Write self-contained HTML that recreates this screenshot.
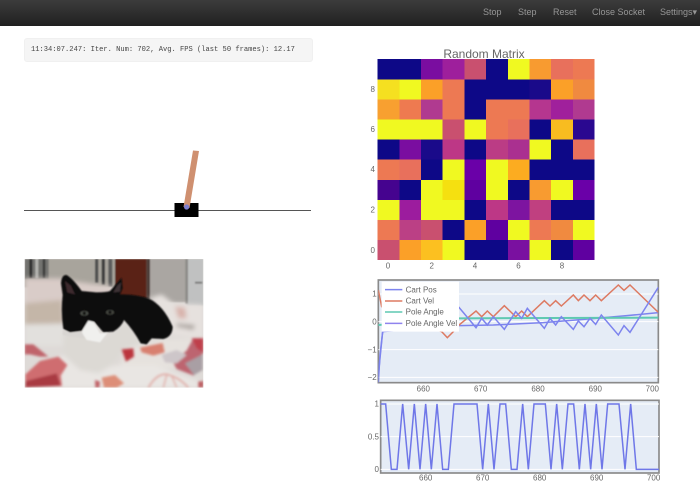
<!DOCTYPE html>
<html><head><meta charset="utf-8"><style>
html,body{margin:0;padding:0;background:#fff;width:700px;height:497px;overflow:hidden;font-family:"Liberation Sans",sans-serif}
.nav{position:absolute;left:0;top:0;width:700px;height:26px;background:linear-gradient(#3c3c3c,#202020)}
.nav span{position:absolute;top:7px;font-size:9px;line-height:11px;color:#969696;white-space:nowrap;filter:blur(.3px)}
.pre{position:absolute;left:24px;top:38px;width:289px;height:24px;box-sizing:border-box;background:#f5f5f5;border:1px solid #f0f0f0;border-radius:3px;font-family:"Liberation Mono",monospace;font-size:7.1px;line-height:22px;padding-left:6px;color:#444;white-space:nowrap;filter:blur(.25px)}
svg{position:absolute;left:0;top:0;filter:blur(.28px)}
svg text{font-family:"Liberation Sans",sans-serif}
</style></head><body>
<div class="nav"><span style="left:483px">Stop</span><span style="left:518px">Step</span><span style="left:553px">Reset</span><span style="left:592px">Close Socket</span><span style="left:660px">Settings▾</span></div>
<div class="pre">11:34:07.247: Iter. Num: 702, Avg. FPS (last 50 frames): 12.17</div>
<svg width="700" height="497" viewBox="0 0 700 497">
<defs>
<filter id="b1" x="-10%" y="-10%" width="120%" height="120%"><feGaussianBlur stdDeviation="2"/></filter>
<filter id="b3" x="-10%" y="-10%" width="120%" height="120%"><feGaussianBlur stdDeviation="4"/></filter>
<filter id="b2" x="-10%" y="-10%" width="120%" height="120%"><feGaussianBlur stdDeviation="7"/></filter>
<clipPath id="cc"><rect x="14" y="12" width="536" height="386"/></clipPath>
<clipPath id="c1"><rect x="55" y="15" width="840" height="308"/></clipPath>
</defs>

<!-- cartpole -->
<line x1="24" y1="210.5" x2="311" y2="210.5" stroke="#555" stroke-width="1"/>
<rect x="174.5" y="203" width="24" height="14" fill="#000"/>
<polygon points="193,150.5 199,151 189.500,208 183.500,207" fill="#cf9070"/>
<circle cx="186.600" cy="207" r="2.600" fill="#7f7fcf"/>

<!-- cat -->
<g transform="translate(20 255) scale(.33333)">
<g clip-path="url(#cc)">
<rect x="14" y="12" width="536" height="386" fill="#dedad7"/>
<g filter="url(#b1)">
<rect x="14" y="12" width="280" height="85" fill="#a8a49c"/>
<rect x="14" y="12" width="72" height="60" fill="#737370"/>
<rect x="28" y="12" width="9" height="58" fill="#2f2f2f"/><rect x="46" y="12" width="9" height="58" fill="#b4b4b0"/><rect x="68" y="12" width="8" height="58" fill="#3e3e3e"/>
<rect x="225" y="12" width="10" height="72" fill="#505050"/><rect x="245" y="12" width="10" height="78" fill="#3e3e3e"/><rect x="265" y="12" width="12" height="84" fill="#5c5c5c"/>
<rect x="285" y="12" width="95" height="120" fill="#5a2419"/>
<rect x="380" y="12" width="125" height="130" fill="#aaa6a2"/>
<rect x="380" y="12" width="10" height="120" fill="#4b3a34"/>
<rect x="500" y="12" width="50" height="140" fill="#c0c1c1"/><rect x="496" y="12" width="8" height="135" fill="#8c8b88"/>
<rect x="525" y="80" width="22" height="6" fill="#7d7d7c"/>
</g>
<g filter="url(#b2)">
<path d="M14 70 L120 70 L170 80 L280 95 L290 125 L130 205 L14 208Z" fill="#d9ccc8"/>
<path d="M14 145 L125 135 L130 205 L14 208Z" fill="#c4b6a8"/>
<path d="M14 208 H135 V272 H14Z" fill="#e2e0dd"/>
<path d="M385 130 L425 118 L460 145 L550 150 V250 L455 240 L420 160Z" fill="#e6e1de"/>
<path d="M465 155 L495 158 L500 190 L475 190Z" fill="#d8b2ab"/>
<path d="M470 205 L525 210 L520 225 L470 215Z" fill="#aaa39e"/>
<path d="M130 240 L190 232 L240 262 L300 222 L318 198 L362 268 L312 282 L272 332 L235 352 L180 345 L130 300Z" fill="#dcd9d4"/>
<path d="M360 268 L430 252 L520 250 L530 310 L470 340 L300 340 L310 285Z" fill="#e6e2de"/>
<path d="M130 300 L180 345 L235 355 L270 335 L300 330 L400 330 L540 380 L550 398 H14 V 360Z" fill="#e9e6e3"/>
</g>
<g filter="url(#b3)">
<path d="M14 268 L40 268 L85 305 L60 305 L30 298 L14 298Z" fill="#c0646a"/>
<path d="M16 358 L60 318 L115 305 L142 330 L122 362 L126 393 L40 396 L16 397Z" fill="#cf6d70"/>
<path d="M18 378 L110 355 L122 392 L16 397Z" fill="#a93a43"/>
<path d="M305 283 L340 280 L342 305 L318 320Z" fill="#bb343d"/>
<path d="M360 278 L428 264 L434 292 L400 302 L365 292Z" fill="#d8806f"/>
<path d="M458 320 L500 287 L520 250 L550 250 V295 L530 310 L522 362 L470 342Z" fill="#bd6570"/>
<path d="M515 250 L550 250 V292 L530 280Z" fill="#bf3f4c"/>
<path d="M495 325 L548 298 L548 345 L522 360Z" fill="#a99fa4"/>
<path d="M425 300 L470 285 L500 300 L470 325 L435 322Z" fill="#cdc6c9"/>
<path d="M245 368 L285 360 L312 385 L290 398 L252 398Z" fill="#dd8e78"/>
<path d="M225 375 L240 380 L238 398 L226 398Z" fill="#c06066"/>
<path d="M535 380 L550 378 V398 H535Z" fill="#bc5c60"/>
<path d="M385 398 Q410 355 440 358 Q480 368 505 398" fill="none" stroke="#e0aaa4" stroke-width="5"/>
<path d="M430 398 L440 360 M470 398 L455 362" stroke="#e0aaa4" stroke-width="4"/>
</g>
<g filter="url(#b1)">
<!-- cat black -->
<path d="M123 85 Q125 58 140 60 Q160 72 185 108 L230 112 Q260 112 270 108 L305 68 L308 100 L300 118 Q350 118 385 130 Q430 150 458 215 Q458 245 430 252 L395 250 L380 268 L362 265 Q340 225 312 195 Q305 215 280 230 L250 232 L222 200 L205 197 L185 228 L150 232 L130 222 Q122 170 128 120Z" fill="#110e11"/>
<path d="M185 232 L205 197 L222 203 L240 235 L262 234 L240 262 L200 255Z" fill="#f0f0ee"/>
<path d="M128 225 L150 234 L185 230 L195 250 L150 245 L128 240Z" fill="#d8d5d2"/>
<ellipse cx="193" cy="175" rx="12" ry="7" fill="#4a4d46"/>
<ellipse cx="270" cy="172" rx="12" ry="7" fill="#44463f"/>
<ellipse cx="193" cy="175" rx="5" ry="5" fill="#111"/>
<ellipse cx="270" cy="172" rx="5" ry="5" fill="#111"/>
<path d="M135 78 L152 92 L165 118 L142 112Z" fill="#3d2b2e"/>
<path d="M292 92 L303 82 L300 110 L280 112Z" fill="#3c3234"/>
</g>
</g>
</g>

<!-- heatmap -->
<g shape-rendering="crispEdges">
<rect x="377.6" y="59.2" width="21.7" height="20.1" fill="#0d0887"/><rect x="399.3" y="59.2" width="21.7" height="20.1" fill="#0d0887"/><rect x="421" y="59.2" width="21.7" height="20.1" fill="#7a0da0"/><rect x="442.7" y="59.2" width="21.7" height="20.1" fill="#9e1f9c"/><rect x="464.4" y="59.2" width="21.7" height="20.1" fill="#c9506f"/><rect x="486.1" y="59.2" width="21.7" height="20.1" fill="#0d0887"/><rect x="507.8" y="59.2" width="21.7" height="20.1" fill="#f0f921"/><rect x="529.5" y="59.2" width="21.7" height="20.1" fill="#f89b30"/><rect x="551.2" y="59.2" width="21.7" height="20.1" fill="#e8705c"/><rect x="572.9" y="59.2" width="21.7" height="20.1" fill="#ed7953"/>
<rect x="377.6" y="79.3" width="21.7" height="20.1" fill="#f5e020"/><rect x="399.3" y="79.3" width="21.7" height="20.1" fill="#f0f921"/><rect x="421" y="79.3" width="21.7" height="20.1" fill="#fba028"/><rect x="442.7" y="79.3" width="21.7" height="20.1" fill="#ed7953"/><rect x="464.4" y="79.3" width="21.7" height="20.1" fill="#0d0887"/><rect x="486.1" y="79.3" width="21.7" height="20.1" fill="#0d0887"/><rect x="507.8" y="79.3" width="21.7" height="20.1" fill="#0d0887"/><rect x="529.5" y="79.3" width="21.7" height="20.1" fill="#1a0a8a"/><rect x="551.2" y="79.3" width="21.7" height="20.1" fill="#fba028"/><rect x="572.9" y="79.3" width="21.7" height="20.1" fill="#f08a40"/>
<rect x="377.6" y="99.4" width="21.7" height="20.1" fill="#f8a030"/><rect x="399.3" y="99.4" width="21.7" height="20.1" fill="#ee7a50"/><rect x="421" y="99.4" width="21.7" height="20.1" fill="#b03a90"/><rect x="442.7" y="99.4" width="21.7" height="20.1" fill="#ed7953"/><rect x="464.4" y="99.4" width="21.7" height="20.1" fill="#0d0887"/><rect x="486.1" y="99.4" width="21.7" height="20.1" fill="#ed7953"/><rect x="507.8" y="99.4" width="21.7" height="20.1" fill="#ed7953"/><rect x="529.5" y="99.4" width="21.7" height="20.1" fill="#b5368f"/><rect x="551.2" y="99.4" width="21.7" height="20.1" fill="#a0209c"/><rect x="572.9" y="99.4" width="21.7" height="20.1" fill="#b03a90"/>
<rect x="377.6" y="119.5" width="21.7" height="20.1" fill="#f0f921"/><rect x="399.3" y="119.5" width="21.7" height="20.1" fill="#f0f921"/><rect x="421" y="119.5" width="21.7" height="20.1" fill="#f0f921"/><rect x="442.7" y="119.5" width="21.7" height="20.1" fill="#c9506f"/><rect x="464.4" y="119.5" width="21.7" height="20.1" fill="#f0f921"/><rect x="486.1" y="119.5" width="21.7" height="20.1" fill="#ed7953"/><rect x="507.8" y="119.5" width="21.7" height="20.1" fill="#e8705c"/><rect x="529.5" y="119.5" width="21.7" height="20.1" fill="#0d0887"/><rect x="551.2" y="119.5" width="21.7" height="20.1" fill="#f8bc20"/><rect x="572.9" y="119.5" width="21.7" height="20.1" fill="#2a0890"/>
<rect x="377.6" y="139.6" width="21.7" height="20.1" fill="#0d0887"/><rect x="399.3" y="139.6" width="21.7" height="20.1" fill="#7a0da0"/><rect x="421" y="139.6" width="21.7" height="20.1" fill="#1a0a8a"/><rect x="442.7" y="139.6" width="21.7" height="20.1" fill="#bd3786"/><rect x="464.4" y="139.6" width="21.7" height="20.1" fill="#0d0887"/><rect x="486.1" y="139.6" width="21.7" height="20.1" fill="#bb3c85"/><rect x="507.8" y="139.6" width="21.7" height="20.1" fill="#aa3090"/><rect x="529.5" y="139.6" width="21.7" height="20.1" fill="#f0f921"/><rect x="551.2" y="139.6" width="21.7" height="20.1" fill="#0d0887"/><rect x="572.9" y="139.6" width="21.7" height="20.1" fill="#e8705c"/>
<rect x="377.6" y="159.7" width="21.7" height="20.1" fill="#ed7953"/><rect x="399.3" y="159.7" width="21.7" height="20.1" fill="#e8705c"/><rect x="421" y="159.7" width="21.7" height="20.1" fill="#0d0887"/><rect x="442.7" y="159.7" width="21.7" height="20.1" fill="#f0f921"/><rect x="464.4" y="159.7" width="21.7" height="20.1" fill="#6a00a8"/><rect x="486.1" y="159.7" width="21.7" height="20.1" fill="#f0f921"/><rect x="507.8" y="159.7" width="21.7" height="20.1" fill="#fcac20"/><rect x="529.5" y="159.7" width="21.7" height="20.1" fill="#0d0887"/><rect x="551.2" y="159.7" width="21.7" height="20.1" fill="#0d0887"/><rect x="572.9" y="159.7" width="21.7" height="20.1" fill="#0d0887"/>
<rect x="377.6" y="179.8" width="21.7" height="20.1" fill="#45038f"/><rect x="399.3" y="179.8" width="21.7" height="20.1" fill="#0d0887"/><rect x="421" y="179.8" width="21.7" height="20.1" fill="#f0f921"/><rect x="442.7" y="179.8" width="21.7" height="20.1" fill="#f5e010"/><rect x="464.4" y="179.8" width="21.7" height="20.1" fill="#5f00a0"/><rect x="486.1" y="179.8" width="21.7" height="20.1" fill="#f0f921"/><rect x="507.8" y="179.8" width="21.7" height="20.1" fill="#0d0887"/><rect x="529.5" y="179.8" width="21.7" height="20.1" fill="#f89b30"/><rect x="551.2" y="179.8" width="21.7" height="20.1" fill="#f0f921"/><rect x="572.9" y="179.8" width="21.7" height="20.1" fill="#6a00a8"/>
<rect x="377.6" y="199.9" width="21.7" height="20.1" fill="#f0f921"/><rect x="399.3" y="199.9" width="21.7" height="20.1" fill="#9c1c9e"/><rect x="421" y="199.9" width="21.7" height="20.1" fill="#f0f921"/><rect x="442.7" y="199.9" width="21.7" height="20.1" fill="#f0f921"/><rect x="464.4" y="199.9" width="21.7" height="20.1" fill="#0d0887"/><rect x="486.1" y="199.9" width="21.7" height="20.1" fill="#bd3786"/><rect x="507.8" y="199.9" width="21.7" height="20.1" fill="#7d14a0"/><rect x="529.5" y="199.9" width="21.7" height="20.1" fill="#c04080"/><rect x="551.2" y="199.9" width="21.7" height="20.1" fill="#0d0887"/><rect x="572.9" y="199.9" width="21.7" height="20.1" fill="#0d0887"/>
<rect x="377.6" y="220" width="21.7" height="20.1" fill="#ed7953"/><rect x="399.3" y="220" width="21.7" height="20.1" fill="#bb4085"/><rect x="421" y="220" width="21.7" height="20.1" fill="#c9506f"/><rect x="442.7" y="220" width="21.7" height="20.1" fill="#0d0887"/><rect x="464.4" y="220" width="21.7" height="20.1" fill="#fba028"/><rect x="486.1" y="220" width="21.7" height="20.1" fill="#5f00a0"/><rect x="507.8" y="220" width="21.7" height="20.1" fill="#f0f921"/><rect x="529.5" y="220" width="21.7" height="20.1" fill="#ed7953"/><rect x="551.2" y="220" width="21.7" height="20.1" fill="#f08a40"/><rect x="572.9" y="220" width="21.7" height="20.1" fill="#f0f921"/>
<rect x="377.6" y="240.1" width="21.7" height="20.1" fill="#c9506f"/><rect x="399.3" y="240.1" width="21.7" height="20.1" fill="#fba028"/><rect x="421" y="240.1" width="21.7" height="20.1" fill="#fcc020"/><rect x="442.7" y="240.1" width="21.7" height="20.1" fill="#f0f921"/><rect x="464.4" y="240.1" width="21.7" height="20.1" fill="#0d0887"/><rect x="486.1" y="240.1" width="21.7" height="20.1" fill="#0d0887"/><rect x="507.8" y="240.1" width="21.7" height="20.1" fill="#7a10a0"/><rect x="529.5" y="240.1" width="21.7" height="20.1" fill="#f0f921"/><rect x="551.2" y="240.1" width="21.7" height="20.1" fill="#0d0887"/><rect x="572.9" y="240.1" width="21.7" height="20.1" fill="#5f00a0"/>
</g>
<text x="484" y="58" font-size="12" fill="#666" text-anchor="middle">Random Matrix</text>
<g font-size="8" fill="#666" text-anchor="end">
<text x="375" y="92">8</text><text x="375" y="132">6</text><text x="375" y="172">4</text><text x="375" y="212.500">2</text><text x="375" y="253">0</text>
</g>
<g font-size="8" fill="#666" text-anchor="middle">
<text x="388" y="268.500">0</text><text x="431.700" y="268.500">2</text><text x="475" y="268.500">4</text><text x="518.500" y="268.500">6</text><text x="562" y="268.500">8</text>
</g>

<!-- chart 1 -->
<g transform="translate(360 275) scale(.33333)">
<rect x="55" y="15" width="840" height="308" fill="#e5ecf6" stroke="#8a8a8a" stroke-width="5"/>
<g stroke="#fff" stroke-width="3"><line x1="55" y1="57" x2="895" y2="57"/><line x1="55" y1="140" x2="895" y2="140"/><line x1="55" y1="224" x2="895" y2="224"/><line x1="55" y1="307" x2="895" y2="307"/></g>
<g clip-path="url(#c1)" fill="none" stroke-width="4.500">
<polyline stroke="#7d84ee" points="55,322 60,240 68,170 297,152 400,150 550,143 707,130 800,122 895,113"/>
<polyline stroke="#dd7a62" points="55,45 65,95 245,170 262,188 280,170 297,150 348,108 365,125 382,108 400,125 433,92 467,125 485,108 502,125 553,77 570,93 587,77 604,93 640,60 655,77 672,60 690,77 707,60 724,77 775,30 792,46 810,30 895,112"/>
<polyline stroke="#5fc9b2" stroke-width="6" points="55,150 297,130 895,128"/>
<polyline stroke="#7d84ee" points="55,300 68,170 297,97 348,158 365,130 382,150 400,125 433,163 467,110 485,130 502,100 553,160 570,130 587,150 604,125 640,163 655,138 672,155 690,130 707,148 724,120 775,180 792,152 810,172 895,37"/>
</g>
<rect x="65" y="20" width="232" height="150" fill="#fff"/>
<g stroke-width="4.500">
<line x1="75" y1="44" x2="127" y2="44" stroke="#7d84ee"/>
<line x1="75" y1="78" x2="127" y2="78" stroke="#dd7a62"/>
<line x1="75" y1="111" x2="127" y2="111" stroke="#5fc9b2"/>
<line x1="75" y1="145" x2="127" y2="145" stroke="#8f83ee"/>
</g>
<g font-size="24" fill="#666">
<text x="137" y="52">Cart Pos</text><text x="137" y="86">Cart Vel</text><text x="137" y="119">Pole Angle</text><text x="137" y="153">Pole Angle Vel</text>
</g>
<g font-size="24" fill="#666" text-anchor="end">
<text x="50" y="65">1</text><text x="50" y="148">0</text><text x="50" y="232">−1</text><text x="50" y="315">−2</text>
</g>
<g font-size="24" fill="#666" text-anchor="middle">
<text x="190" y="350">660</text><text x="362" y="350">670</text><text x="534" y="350">680</text><text x="706" y="350">690</text><text x="877" y="350">700</text>
</g>
</g>

<!-- chart 2 -->
<g transform="translate(360 392) scale(.33333)">
<rect x="62" y="25" width="835" height="218" fill="#e5ecf6" stroke="#8a8a8a" stroke-width="5"/>
<g stroke="#fff" stroke-width="3"><line x1="62" y1="36" x2="897" y2="36"/><line x1="62" y1="134" x2="897" y2="134"/><line x1="62" y1="232" x2="897" y2="232"/></g>
<polyline fill="none" stroke="#6f77e8" stroke-width="4.500" points="62,36 77,36 94,232 111,232 128,36 146,232 163,36 180,232 197,36 214,232 231,36 248,232 265,232 282,36 351,36 368,232 385,36 402,232 420,36 437,36 454,232 471,232 488,36 505,232 522,36 556,36 573,232 590,36 607,232 624,36 641,36 658,232 675,36 692,232 709,36 726,232 743,36 777,36 795,232 812,36 829,232 897,232"/>
<g font-size="24" fill="#666" text-anchor="end">
<text x="57" y="44">1</text><text x="57" y="142">0.5</text><text x="57" y="240">0</text>
</g>
<g font-size="24" fill="#666" text-anchor="middle">
<text x="197" y="266">660</text><text x="368" y="266">670</text><text x="539" y="266">680</text><text x="710" y="266">690</text><text x="881" y="266">700</text>
</g>
</g>
</svg>
</body></html>
